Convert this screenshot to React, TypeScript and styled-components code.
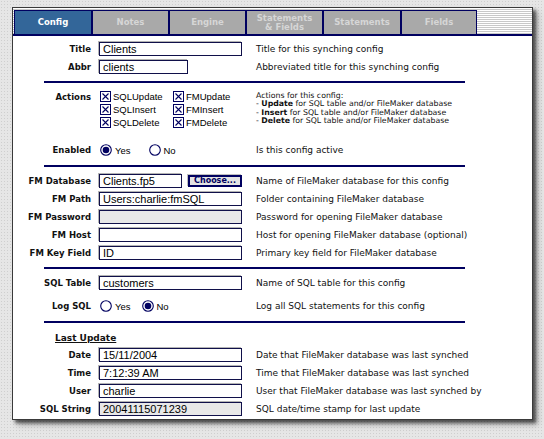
import styled, { createGlobalStyle } from "styled-components";

const GlobalStyle = createGlobalStyle`
    html, body {
        margin: 0;
        padding: 0;
    }
    body {
        width: 544px;
        height: 439px;
        overflow: hidden;
        background-color: #e6e6e6;
        background-image: radial-gradient(#cfcfcf 0.6px, transparent 0.8px);
        background-size: 3px 3px;
        font-family: "DejaVu Sans", Verdana, sans-serif;
        color: #111;
    }
`;

const NAVY = "#000060";

const Page = styled.div`
    padding: 7px 0 0 12px;
`;

const Window = styled.div`
    width: 521px;
    height: 413px;
    box-sizing: border-box;
    background: #fff;
    border: 1px solid #3a3a3a;
    box-shadow: 3px 3px 3px rgba(0, 0, 0, 0.55), 5px 5px 6px rgba(0, 0, 0, 0.25);
    display: flex;
    flex-direction: column;
    overflow: hidden;
`;

const TabBar = styled.div`
    display: flex;
    flex-shrink: 0;
    padding: 2px 0 0 1px;
    height: 28px;
    box-sizing: border-box;
    border-bottom: 2px solid ${NAVY};
    background: repeating-linear-gradient(to bottom, #fff 0px, #fff 1px, #c8c8c8 1px, #c8c8c8 2px);
`;

const Tab = styled.div<{ $active?: boolean; $w: number }>`
    width: ${p => p.$w}px;
    box-sizing: border-box;
    border: 1px solid ${NAVY};
    border-bottom: none;
    background: ${p => (p.$active ? "#336699" : "#a9a9a9")};
    color: ${p => (p.$active ? "#fff" : "#d6d6d6")};
    font-weight: bold;
    font-size: 8.5px;
    line-height: 9px;
    text-align: center;
    display: flex;
    align-items: center;
    justify-content: center;
`;

const Body = styled.div`
    padding-top: 4px;
    display: flex;
    flex-direction: column;
`;

const Row = styled.div<{ $h?: number; $mt?: number }>`
    display: grid;
    grid-template-columns: 78px 149px 1fr;
    column-gap: 8px;
    align-items: center;
    flex-shrink: 0;
    height: ${p => p.$h ?? 18}px;
    margin-top: ${p => p.$mt ?? 0}px;
`;

const Label = styled.div<{ $top?: boolean }>`
    text-align: right;
    font-weight: bold;
    font-size: 8.5px;
    align-self: ${p => (p.$top ? "start" : "center")};
    margin-top: ${p => (p.$top ? "2px" : "0")};
`;

const Desc = styled.div`
    font-size: 9px;
    white-space: nowrap;
`;

const SmallDesc = styled.div`
    font-size: 7.8px;
    line-height: 8.4px;
    align-self: start;
    margin-top: 2px;
    white-space: nowrap;
    b {
        font-weight: bold;
    }
`;

const Field = styled.div<{ $w: number; $off?: boolean }>`
    width: ${p => p.$w}px;
    height: 14px;
    box-sizing: border-box;
    border: 1px solid #10104a;
    box-shadow: -1px -1px 0 #b4b4b4;
    background: ${p => (p.$off ? "#e8e8e8" : "#fff")};
    font-family: "Liberation Sans", Arial, sans-serif;
    font-size: 11px;
    line-height: 12px;
    padding-left: 3px;
    color: #000;
    overflow: hidden;
    white-space: nowrap;
`;

const Inline = styled.div`
    display: flex;
    align-items: center;
    gap: 6px;
`;

const Button = styled.div`
    width: 54px;
    height: 12px;
    box-sizing: border-box;
    border: 2px solid ${NAVY};
    box-shadow: -1px -1px 0 #c0c0c0;
    background: #e4e4e4;
    color: ${NAVY};
    font-weight: bold;
    font-size: 8px;
    line-height: 8px;
    text-align: center;
`;

const Rule = styled.div<{ $mt: number; $mb: number }>`
    flex-shrink: 0;
    margin: ${p => p.$mt}px 0 ${p => p.$mb}px 31px;
    width: 421px;
    height: 2px;
    background: ${NAVY};
`;

const ActionBlock = styled.div`
    display: grid;
    grid-template-columns: 78px 149px 1fr;
    column-gap: 8px;
    flex-shrink: 0;
`;

const Checks = styled.div`
    display: grid;
    grid-template-columns: 73px 73px;
    grid-auto-rows: 13px;
    margin-left: 1px;
`;

const Check = styled.div`
    display: flex;
    align-items: center;
    gap: 2px;
    font-family: "Liberation Sans", Arial, sans-serif;
    font-size: 9.5px;
    color: #000;
`;

const Options = styled.div<{ $gap: number }>`
    display: flex;
    align-items: center;
    gap: ${p => p.$gap}px;
    margin-left: 1px;
`;

const Option = styled.div`
    display: flex;
    align-items: center;
    gap: 3px;
    font-family: "Liberation Sans", Arial, sans-serif;
    font-size: 9.5px;
    color: #000;
`;

const Heading = styled.div`
    flex-shrink: 0;
    padding-left: 42px;
    font-weight: bold;
    font-size: 9px;
    text-decoration: underline;
    height: 16px;
    line-height: 16px;
    margin-top: 7px;
`;

const CheckBox = () => (
    <svg width="11" height="11" viewBox="0 0 11 11">
        <rect x="0.5" y="0.5" width="10" height="10" fill="#fff" stroke={NAVY} />
        <path d="M2.5 2.5 L8.5 8.5 M8.5 2.5 L2.5 8.5" stroke={NAVY} strokeWidth="1.1" />
    </svg>
);

const Radio = ({ on }: { on?: boolean }) => (
    <svg width="12" height="12" viewBox="0 0 12 12">
        <circle cx="6" cy="6" r="5.3" fill="#fff" stroke={NAVY} strokeWidth="1.1" />
        {on && <circle cx="6" cy="6" r="3.3" fill={NAVY} />}
    </svg>
);

const tabs = [
    { name: "Config", w: 78, active: true },
    { name: "Notes", w: 77 },
    { name: "Engine", w: 77 },
    { name: "Statements & Fields", w: 77 },
    { name: "Statements", w: 78 },
    { name: "Fields", w: 76 },
];

const App = () => {
    return (
        <>
            <GlobalStyle />
            <Page>
                <Window>
                    <TabBar>
                        {tabs.map(t => (
                            <Tab key={t.name} $w={t.w} $active={t.active}>
                                {t.name === "Statements & Fields" ? <span>Statements<br />&amp; Fields</span> : t.name}
                            </Tab>
                        ))}
                    </TabBar>
                    <Body>
                        <Row>
                            <Label>Title</Label>
                            <Field $w={143}>Clients</Field>
                            <Desc>Title for this synching config</Desc>
                        </Row>
                        <Row>
                            <Label>Abbr</Label>
                            <Field $w={89}>clients</Field>
                            <Desc>Abbreviated title for this synching config</Desc>
                        </Row>

                        <Rule $mt={5} $mb={7} />

                        <ActionBlock>
                            <Label $top>Actions</Label>
                            <Checks>
                                <Check><CheckBox />SQLUpdate</Check>
                                <Check><CheckBox />FMUpdate</Check>
                                <Check><CheckBox />SQLInsert</Check>
                                <Check><CheckBox />FMInsert</Check>
                                <Check><CheckBox />SQLDelete</Check>
                                <Check><CheckBox />FMDelete</Check>
                            </Checks>
                            <SmallDesc>
                                Actions for this config:<br />
                                - <b>Update</b> for SQL table and/or FileMaker database<br />
                                - <b>Insert</b> for SQL table and/or FileMaker database<br />
                                - <b>Delete</b> for SQL table and/or FileMaker database
                            </SmallDesc>
                        </ActionBlock>

                        <Row $mt={12}>
                            <Label>Enabled</Label>
                            <Options $gap={18}>
                                <Option><Radio on />Yes</Option>
                                <Option><Radio />No</Option>
                            </Options>
                            <Desc>Is this config active</Desc>
                        </Row>

                        <Rule $mt={6} $mb={5} />

                        <Row>
                            <Label>FM Database</Label>
                            <Inline>
                                <Field $w={83}>Clients.fp5</Field>
                                <Button>Choose...</Button>
                            </Inline>
                            <Desc>Name of FileMaker database for this config</Desc>
                        </Row>
                        <Row>
                            <Label>FM Path</Label>
                            <Field $w={143}>Users:charlie:fmSQL</Field>
                            <Desc>Folder containing FileMaker database</Desc>
                        </Row>
                        <Row>
                            <Label>FM Password</Label>
                            <Field $w={143} $off />
                            <Desc>Password for opening FileMaker database</Desc>
                        </Row>
                        <Row>
                            <Label>FM Host</Label>
                            <Field $w={143} />
                            <Desc>Host for opening FileMaker database (optional)</Desc>
                        </Row>
                        <Row>
                            <Label>FM Key Field</Label>
                            <Field $w={143}>ID</Field>
                            <Desc>Primary key field for FileMaker database</Desc>
                        </Row>

                        <Rule $mt={5} $mb={5} />

                        <Row>
                            <Label>SQL Table</Label>
                            <Field $w={143}>customers</Field>
                            <Desc>Name of SQL table for this config</Desc>
                        </Row>
                        <Row $mt={5}>
                            <Label>Log SQL</Label>
                            <Options $gap={11}>
                                <Option><Radio />Yes</Option>
                                <Option><Radio on />No</Option>
                            </Options>
                            <Desc>Log all SQL statements for this config</Desc>
                        </Row>

                        <Rule $mt={6} $mb={0} />

                        <Heading>Last Update</Heading>
                        <Row>
                            <Label>Date</Label>
                            <Field $w={143}>15/11/2004</Field>
                            <Desc>Date that FileMaker database was last synched</Desc>
                        </Row>
                        <Row>
                            <Label>Time</Label>
                            <Field $w={143}>7:12:39 AM</Field>
                            <Desc>Time that FileMaker database was last synched</Desc>
                        </Row>
                        <Row>
                            <Label>User</Label>
                            <Field $w={143}>charlie</Field>
                            <Desc>User that FileMaker database was last synched by</Desc>
                        </Row>
                        <Row>
                            <Label>SQL String</Label>
                            <Field $w={143} $off>20041115071239</Field>
                            <Desc>SQL date/time stamp for last update</Desc>
                        </Row>
                    </Body>
                </Window>
            </Page>
        </>
    );
};

export default App;
